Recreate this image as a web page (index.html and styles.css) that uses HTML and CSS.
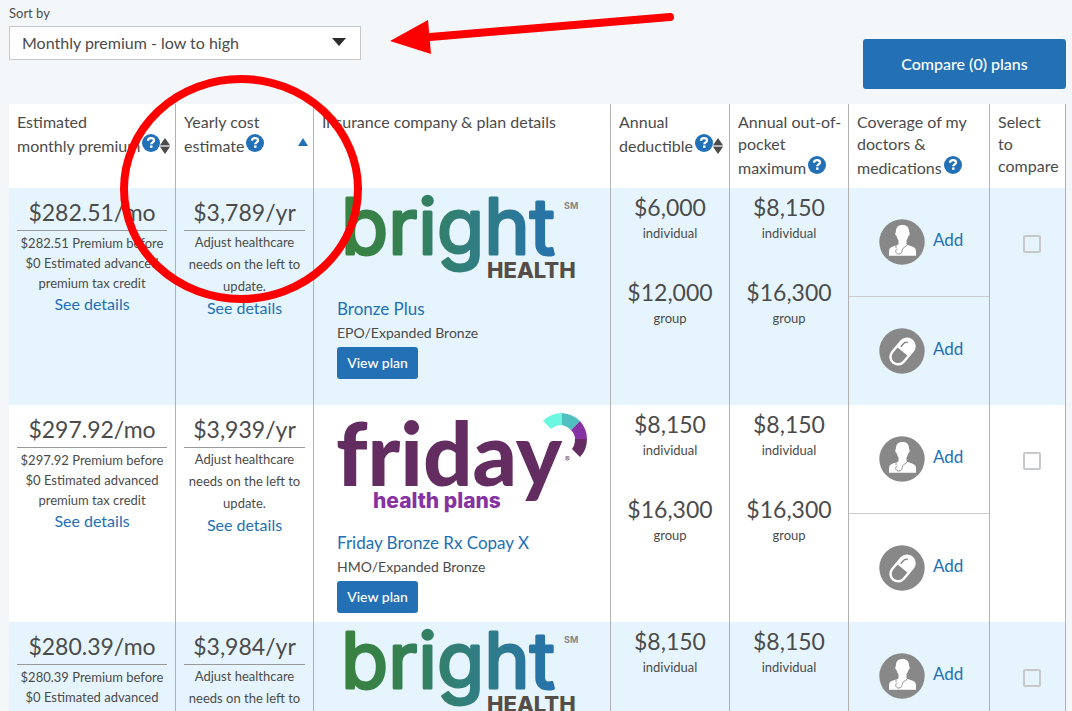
FILE: index.html
```html
<!DOCTYPE html>
<html lang="en">
<head>
<meta charset="utf-8">
<title>Compare health plans</title>
<link rel="stylesheet" href="styles.css">
</head>
<body>
<svg class="defs" width="0" height="0" aria-hidden="true">
  <defs>
    <linearGradient id="bright-fill" gradientUnits="userSpaceOnUse" x1="8" y1="0" x2="222" y2="0">
      <stop offset="0" stop-color="#3a8240"/><stop offset="0.25" stop-color="#35804f"/>
      <stop offset="0.55" stop-color="#327f7c"/><stop offset="1" stop-color="#2672ae"/>
    </linearGradient>
    <symbol id="help" viewBox="0 0 18 18">
      <circle cx="9" cy="9" r="9" fill="#2270b5"/>
      <path d="M6 6.700C6.100 4.900 7.300 4.200 9 4.200c1.800 0 3 .9 3 2.300 0 1.900-2.700 1.900-2.700 3.800" fill="none" stroke="#fff" stroke-width="2.300"/>
      <rect x="8.100" y="11.400" width="2.400" height="2.400" fill="#fff"/>
    </symbol>
    <symbol id="sort" viewBox="0 0 10 16">
      <path d="M5 0l5 7.300H0zM0 8.700h10L5 16z" fill="#4b4b4b"/><path d="M0 8h10" stroke="#999" stroke-width="1"/>
    </symbol>
    <symbol id="doctor" viewBox="0 0 46 46">
      <circle cx="23" cy="23" r="22.700" fill="#888"/>
      <path d="M23.500 6c4.500 0 6.800 2.600 6.600 7.200 1.200.4.500 3.800-.8 4-.4 2.200-1.300 3.200-1.800 4.300v3.200c0 1 1.500 1.400 3.500 2 4 1.200 6 2.300 6 5.800v4.300H10v-4.300c0-3.500 2-4.600 6-5.800 2-.6 3.500-1 3.500-2v-3.200c-.5-1.100-1.400-2.100-1.800-4.300-1.300-.2-2-3.600-.8-4C16.700 8.600 19 6 23.500 6z" fill="#fff"/>
      <path d="M17 25.500v3.500M18.500 30c-2.500 0-2.700 5 1.300 5 4.200 0 3-5.500 4.600-6l4-3" fill="none" stroke="#888" stroke-width="0.900"/>
    </symbol>
    <symbol id="pill" viewBox="0 0 46 46">
      <circle cx="23" cy="23" r="22.700" fill="#888"/>
      <g transform="rotate(40 23.500 23.500)">
        <rect x="16" y="9" width="15" height="29" rx="7.500" fill="none" stroke="#fff" stroke-width="2.500"/>
        <path d="M16 23.500V17a7.500 7.500 0 0 1 15 0v6.500z" fill="#fff"/>
        <path d="M19.200 21v-4c0-2 1-3.300 2.700-3.800" fill="none" stroke="#888" stroke-width="1.500"/>
      </g>
    </symbol>
    <symbol id="bright-logo" class="open" viewBox="0 0 250 89">
      <text class="bright-word" x="4" y="58">bright</text>
      <text class="bright-sub" x="150" y="82">HEALTH</text>
      <text class="bright-mark" x="227" y="13">SM</text>
    </symbol>
  </defs>
</svg>
<main class="page">
  <header class="toolbar">
    <div class="sort">
      <label class="sort-label" for="sort-by">Sort by</label>
      <div class="sort-box">
        <select id="sort-by" class="sort-select"><option>Monthly premium - low to high</option></select>
        <svg class="caret" viewBox="0 0 14 8" aria-hidden="true"><path d="M0 0h14L7 8z" fill="#2b2b2b"/></svg>
      </div>
    </div>
    <button class="button compare" type="button">Compare (0) plans</button>
  </header>
  <table class="plans">
    <colgroup>
      <col class="c-premium"><col class="c-yearly"><col><col class="c-money"><col class="c-money"><col class="c-coverage"><col class="c-select">
    </colgroup>
    <thead>
      <tr>
        <th scope="col"><div>Estimated</div><div class="line">monthly premium<svg class="help"><use href="#help"/></svg><svg class="sorter"><use href="#sort"/></svg></div></th>
        <th scope="col"><div>Yearly cost</div><div class="line">estimate<svg class="help"><use href="#help"/></svg><svg class="up" viewBox="0 0 10 8"><path d="M5 0l5 8H0z" fill="#2270b5"/></svg></div></th>
        <th scope="col">Insurance company &amp; plan details</th>
        <th scope="col"><div>Annual</div><div class="line">deductible<svg class="help"><use href="#help"/></svg><svg class="sorter"><use href="#sort"/></svg></div></th>
        <th scope="col"><div>Annual out-of-</div><div>pocket</div><div class="line">maximum<svg class="help"><use href="#help"/></svg></div></th>
        <th scope="col"><div>Coverage of my</div><div>doctors &amp;</div><div class="line">medications<svg class="help"><use href="#help"/></svg></div></th>
        <th scope="col">Select<br>to<br>compare</th>
      </tr>
    </thead>
    <tbody>
      <tr>
        <td class="cost"><div class="price">$282.51/mo</div><p class="note premium-note">$282.51 Premium before<br>$0 Estimated advanced<br>premium tax credit</p><a href="#">See details</a></td>
        <td class="cost"><div class="price">$3,789/yr</div><p class="note">Adjust healthcare<br>needs on the left to<br>update.</p><a href="#">See details</a></td>
        <td class="plan"><svg class="logo bright" viewBox="0 0 250 89" role="img" aria-label="Bright Health"><use href="#bright-logo"/></svg><a class="name" href="#">Bronze Plus</a><p class="kind">EPO/Expanded Bronze</p><button class="button view" type="button">View plan</button></td>
        <td class="money"><div class="amount">$6,000</div><div class="who">individual</div><div class="amount second">$12,000</div><div class="who">group</div></td>
        <td class="money"><div class="amount">$8,150</div><div class="who">individual</div><div class="amount second">$16,300</div><div class="who">group</div></td>
        <td class="coverage"><div class="cover"><svg class="round"><use href="#doctor"/></svg><a href="#">Add</a></div><div class="cover"><svg class="round"><use href="#pill"/></svg><a href="#">Add</a></div></td>
        <td class="pick"><input type="checkbox" aria-label="Compare Bronze Plus"></td>
      </tr>
      <tr>
        <td class="cost"><div class="price">$297.92/mo</div><p class="note premium-note">$297.92 Premium before<br>$0 Estimated advanced<br>premium tax credit</p><a href="#">See details</a></td>
        <td class="cost"><div class="price">$3,939/yr</div><p class="note">Adjust healthcare<br>needs on the left to<br>update.</p><a href="#">See details</a></td>
        <td class="plan">
          <svg class="logo friday" viewBox="0 0 250 106" role="img" aria-label="Friday Health Plans">
            <text class="friday-word" x="-1" y="73">friday</text>
            <text class="friday-sub" x="36" y="95">health plans</text>
            <path d="M206 8Q214 0 225 0V12Q219 12 214 16z" fill="#6cf7e0"/>
            <path d="M225 0Q236 1 243 8L234 17Q230 13 225 12z" fill="#50bfc0"/>
            <path d="M243 8Q250 16 250 26H238Q238 21 234 17z" fill="#8632a2"/>
            <path d="M250 26Q250 37 243 44L235 36Q238 32 238 26z" fill="#632d62"/>
            <text class="friday-mark" x="228" y="49">®</text>
          </svg>
          <a class="name" href="#">Friday Bronze Rx Copay X</a><p class="kind">HMO/Expanded Bronze</p><button class="button view" type="button">View plan</button></td>
        <td class="money"><div class="amount">$8,150</div><div class="who">individual</div><div class="amount second">$16,300</div><div class="who">group</div></td>
        <td class="money"><div class="amount">$8,150</div><div class="who">individual</div><div class="amount second">$16,300</div><div class="who">group</div></td>
        <td class="coverage"><div class="cover"><svg class="round"><use href="#doctor"/></svg><a href="#">Add</a></div><div class="cover"><svg class="round"><use href="#pill"/></svg><a href="#">Add</a></div></td>
        <td class="pick"><input type="checkbox" aria-label="Compare Friday Bronze Rx Copay X"></td>
      </tr>
      <tr>
        <td class="cost"><div class="price">$280.39/mo</div><p class="note premium-note">$280.39 Premium before<br>$0 Estimated advanced</p></td>
        <td class="cost"><div class="price">$3,984/yr</div><p class="note">Adjust healthcare<br>needs on the left to</p></td>
        <td class="plan"><svg class="logo bright" viewBox="0 0 250 89" role="img" aria-label="Bright Health"><use href="#bright-logo"/></svg></td>
        <td class="money"><div class="amount">$8,150</div><div class="who">individual</div></td>
        <td class="money"><div class="amount">$8,150</div><div class="who">individual</div></td>
        <td class="coverage"><div class="cover"><svg class="round"><use href="#doctor"/></svg><a href="#">Add</a></div></td>
        <td class="pick"><input type="checkbox" aria-label="Compare third plan"></td>
      </tr>
    </tbody>
  </table>
  <svg class="markup" viewBox="0 0 1072 711" aria-hidden="true">
    <ellipse cx="241" cy="189" rx="117" ry="110" fill="none" stroke="#f00" stroke-width="8"/>
    <path d="M430 37L670 17" stroke="#f00" stroke-width="8" stroke-linecap="round"/>
    <path d="M390 41L428 20L431 54z" fill="#f00"/>
  </svg>
</main>
</body>
</html>
```
FILE: styles.css
```css
* { box-sizing: border-box; }
body { margin: 0; background: #f3f7fa; color: #4b4b4b; font: 16px/22px Lato, "Noto Sans", sans-serif; }
a { color: #2270b5; text-decoration: none; }
p { margin: 0; }
svg { flex: none; }
.defs { position: absolute; }
.open { overflow: visible; }
.page { position: relative; height: 100vh; overflow: hidden; padding: 2px 6px 0 9px; }
.toolbar { display: flex; justify-content: space-between; align-items: flex-start; height: 102px; }
.sort { width: 352px; }
.sort-label { display: block; font-size: 13px; line-height: 22px; padding-bottom: 2px; }
.sort-box { position: relative; }
.sort-select { display: block; width: 100%; height: 34px; padding: 0 12px; border: 1px solid #c8c8c8; border-radius: 0; background: #fff; color: inherit; font: inherit; appearance: none; }
.caret { position: absolute; top: 12px; right: 15px; width: 14px; height: 8px; pointer-events: none; }
.button { border: 0; border-radius: 3px; background: #2371b4; color: #fff; font: inherit; font-weight: 500; }
.compare { width: 203px; height: 50px; margin-top: 37px; }
.plans { width: 100%; table-layout: fixed; border-collapse: separate; border-spacing: 0; }
.c-premium { width: 167px; }
.c-yearly { width: 138px; }
.c-money { width: 119px; }
.c-coverage { width: 141px; }
.c-select { width: 76px; }
th, td { border-right: 1px solid #b1b1b1; vertical-align: top; }
th { height: 84px; padding: 7px 0 0 8px; background: #fff; font-weight: 400; text-align: left; white-space: nowrap; }
td { height: 217px; padding: 8px 8px 0; background: #fff; }
tbody tr:nth-child(odd) td { background: #e6f5fd; }
.line { display: flex; align-items: flex-end; height: 24px; }
.help { width: 18px; height: 18px; margin: 0 0 5px 2px; }
.sorter { width: 10px; height: 16px; margin-bottom: 3px; }
.up { width: 10px; height: 8px; margin: 0 5px 11px auto; }
td.cost { text-align: center; white-space: nowrap; }
.price { padding-bottom: 2px; border-bottom: 1px solid #999; font-size: 23px; line-height: 32px; }
.note { font-size: 13px; line-height: 22px; }
.premium-note { padding-top: 2px; line-height: 20px; }
td.plan { padding-left: 23px; }
.logo { display: block; width: 250px; margin-bottom: 12px; overflow: visible; }
.bright { height: 89px; }
.friday { height: 106px; }
.name { display: block; font-size: 17px; line-height: 24px; }
.kind { font-size: 14px; line-height: 24px; }
.view { width: 81px; height: 32px; margin-top: 2px; padding: 0; font-size: 14px; }
td.money { padding-top: 1px; text-align: center; }
.amount { font-size: 23px; line-height: 36px; }
.who { font-size: 13px; line-height: 16px; }
.second { margin-top: 33px; }
td.coverage { padding: 0; }
.cover { display: flex; align-items: center; gap: 8px; height: 108px; padding-left: 30px; font-size: 17px; }
.cover + .cover { height: 109px; border-top: 1px solid #ccc; }
.round { width: 46px; height: 46px; }
.cover a { padding-bottom: 4px; }
td.pick { padding: 47px 0 0 33px; }
.pick input { display: block; width: 18px; height: 18px; margin: 0; border: 2px solid #c6c8ca; border-radius: 2px; appearance: none; }
.markup { position: absolute; top: 0; left: 0; width: 1072px; height: 711px; pointer-events: none; }
.bright-word { font: 400 77px Inter, sans-serif; fill: url(#bright-fill); stroke: url(#bright-fill); stroke-width: 3px; stroke-linejoin: round; }
.bright-sub { font: 800 22px Inter, sans-serif; fill: #574d48; }
.bright-mark { font: 700 9px Inter, sans-serif; fill: #8b8583; }
.friday-word { font: 900 87px Lato, sans-serif; fill: #632d62; }
.friday-sub { font: 800 21px Inter, sans-serif; fill: #8632a2; }
.friday-mark { font: 7px Inter, sans-serif; fill: #632d62; }
```
